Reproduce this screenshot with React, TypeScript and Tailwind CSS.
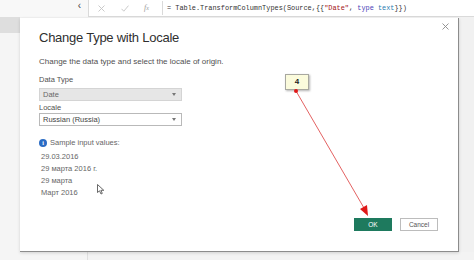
import React from "react";

function Dropdown({ value, disabled }: { value: string; disabled?: boolean }) {
  return (
    <div
      className={
        "flex items-center justify-between w-[143px] h-[13px] pl-[3px] pr-[5px] border text-[7.5px] leading-[11px] " +
        (disabled
          ? "bg-[#e6e6e6] border-[#d4d4d4] text-[#666]"
          : "bg-white border-[#b9b9b9] text-[#444]")
      }
    >
      <span>{value}</span>
      <svg width="4" height="3" viewBox="0 0 4 3">
        <path d="M0 0 L4 0 L2 3 Z" fill="#777" />
      </svg>
    </div>
  );
}

export default function App() {
  return (
    <div className="relative w-[474px] h-[260px] overflow-hidden bg-[#f3f3f3] font-['Liberation_Sans',Arial,sans-serif]">
      {/* top formula bar */}
      <div className="flex h-[17px]">
        <div className="w-[88px] bg-[#f8f8f8] flex justify-end items-start pr-[7px]">
          <span className="text-[10px] leading-[12px] text-[#444]">‹</span>
        </div>
        <div className="flex-1 flex bg-white border-l border-b border-[#dadada]">
          <div className="w-[73px] flex items-center pl-[9px]">
            <svg width="7" height="7" viewBox="0 0 7 7">
              <path d="M0.5 0.5 L6.5 6.5 M6.5 0.5 L0.5 6.5" stroke="#c4c4c4" strokeWidth="0.9" />
            </svg>
            <svg width="8" height="7" viewBox="0 0 8 7" className="ml-[16px]">
              <path d="M0.5 3.8 L2.8 6.2 L7.5 0.6" stroke="#c4c4c4" strokeWidth="0.9" fill="none" />
            </svg>
            <span className="ml-[15px] text-[8px] leading-[10px] italic text-[#9a9a9a] font-['Liberation_Serif',serif]">
              f<span className="text-[6px]">x</span>
            </span>
          </div>
          <div className="w-px bg-[#dadada] my-[1px]" />
          <div className="pl-[4px] flex items-center font-['Liberation_Mono',monospace] text-[6.9px] text-[#333] whitespace-pre">
            <span>= Table.TransformColumnTypes(Source,{"{{"}</span>
            <span className="text-[#a31515]">"Date"</span>
            <span>, </span>
            <span className="text-[#4b3fb8]">type</span>
            <span> </span>
            <span className="text-[#2a7ab0]">text</span>
            <span>{"}})"}</span>
          </div>
        </div>
      </div>

      {/* body row */}
      <div className="flex h-[235px]">
        <div className="w-[20px] flex flex-col">
          <div className="h-[16px] bg-[#dedede]" />
          <div className="flex-1 bg-[#f5f5f5]" />
        </div>

        {/* dialog */}
        <div className="relative mt-[1px] w-[439px] h-[234px] bg-white border-r border-b border-[#8c8c8c] shadow-[0_1px_3px_rgba(0,0,0,0.15)] flex flex-col pl-[19px] pr-[20px] pb-[20px]">
          <svg
            width="7"
            height="7"
            viewBox="0 0 7 7"
            className="absolute top-[5px] right-[9px]"
          >
            <path d="M0.5 0.5 L6.5 6.5 M6.5 0.5 L0.5 6.5" stroke="#8a8a8a" strokeWidth="0.9" />
          </svg>

          <div className="pt-[12px] text-[13px] leading-[16px] text-[#2f2f2f] tracking-[-0.25px]">
            Change Type with Locale
          </div>
          <div className="mt-[11px] text-[8px] leading-[10px] text-[#505050]">
            Change the data type and select the locale of origin.
          </div>
          <div className="mt-[8px] text-[7.5px] leading-[10px] text-[#505050]">Data Type</div>
          <div className="mt-[3px]">
            <Dropdown value="Date" disabled />
          </div>
          <div className="mt-[2px] text-[7.5px] leading-[10px] text-[#505050]">Locale</div>
          <Dropdown value="Russian (Russia)" />

          <div className="mt-[12px] flex items-center h-[10px] text-[7.5px] leading-[10px] text-[#666]">
            <span className="w-[8px] h-[8px] rounded-full bg-[#2b6cc4] text-white text-[6px] leading-[8px] font-bold flex items-center justify-center font-['Liberation_Serif',serif]">
              i
            </span>
            <span className="ml-[3px]">Sample input values:</span>
          </div>
          <div className="mt-[3px] pl-[2px] flex flex-col text-[7.5px] leading-[12px] text-[#666]">
            <span>29.03.2016</span>
            <span>29 марта 2016 г.</span>
            <span>29 марта</span>
            <span>Март 2016</span>
          </div>

          <div className="mt-auto flex justify-end gap-[8px]">
            <div className="w-[38px] h-[13px] bg-[#1e7a5e] text-white text-[6.5px] flex items-center justify-center">
              OK
            </div>
            <div className="w-[38px] h-[13px] bg-white border border-[#bcbcbc] text-[#555] text-[6.5px] flex items-center justify-center">
              Cancel
            </div>
          </div>
        </div>

        <div className="flex-1 bg-[#f1f1f1]" />
      </div>

      {/* bottom strip */}
      <div className="flex h-[8px]">
        <div className="w-[87px] bg-[#f5f5f5]" />
        <div className="w-px bg-[#e0e0e0]" />
        <div className="flex-1 bg-[#f3f3f3]" />
      </div>

      {/* callout annotation */}
      <div className="absolute left-[285px] top-[74px] w-[24px] h-[16px] bg-[#fbfbdc] border border-[#a8a8a0] shadow-[1px_1px_2px_rgba(0,0,0,0.3)] flex items-center justify-center text-[8px] font-bold text-[#222]">
        4
      </div>
      <svg className="absolute inset-0 pointer-events-none" width="474" height="260" viewBox="0 0 474 260">
        <line x1="296" y1="91" x2="364" y2="208" stroke="#e05050" strokeWidth="0.9" />
        <path d="M368 216 L360 209 L367 205 Z" fill="#e01818" />
        <circle cx="296" cy="91" r="2" fill="#e01818" />
      </svg>

      {/* mouse cursor */}
      <svg className="absolute left-[97px] top-[184px] pointer-events-none" width="8" height="11" viewBox="0 0 8 11">
        <path d="M0.5 0.5 L0.5 8.5 L2.5 6.8 L4 10 L5.3 9.4 L3.9 6.3 L6.8 6.3 Z" fill="white" stroke="#444" strokeWidth="0.8" />
      </svg>
    </div>
  );
}
